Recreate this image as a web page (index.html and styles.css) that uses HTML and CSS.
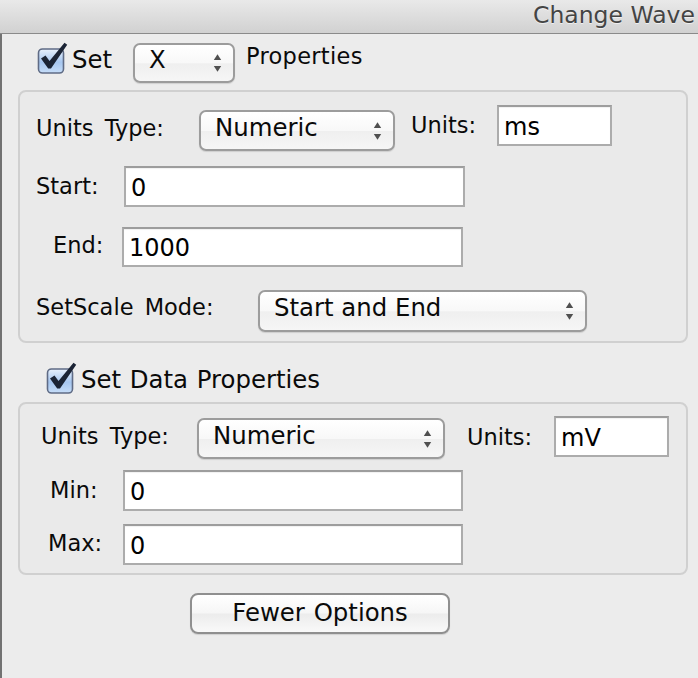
FILE: index.html
```html
<!DOCTYPE html>
<html>
<head>
<meta charset="utf-8">
<title>Change Wave</title>
<link rel="stylesheet" href="styles.css">
</head>
<body>
<div class="window">
  <div class="titlebar"><span class="title">Change Wave</span></div>
  <div class="content">
    <div class="row row-set">
      <svg class="checkbox" width="31" height="32" viewBox="0 0 31 32">
        <defs>
          <linearGradient id="cbg1" x1="0" y1="0" x2="0" y2="1">
            <stop offset="0" stop-color="#e8f1fc"/>
            <stop offset="0.55" stop-color="#a6c6ef"/>
            <stop offset="1" stop-color="#c6ddf8"/>
          </linearGradient>
        </defs>
        <rect x="1.5" y="7" width="25" height="24" rx="4" fill="url(#cbg1)" stroke="#5f6b85" stroke-width="1.6"/>
        <path d="M4 16.5 L8.5 13.5 L12.5 19 L27.5 0.8 L30.2 2.8 L14 26.5 L11.2 26.5 Z" fill="#1b2435"/>
      </svg>
      <span class="check-label set-label">Set</span>
      <div class="popup popup-x">
        <span class="popup-text">X</span>
        <svg class="arrows" width="9" height="20" viewBox="0 0 9 20"><polygon points="0.8,7 4.5,1.2 8.2,7" fill="#505050"/><polygon points="0.8,13 4.5,18.8 8.2,13" fill="#505050"/></svg>
      </div>
      <span class="label props-label">Properties</span>
    </div>

    <div class="group group-x">
      <div class="row row-a">
        <span class="label lbl-a">Units Type:</span>
        <div class="popup popup-num1">
          <span class="popup-text">Numeric</span>
          <svg class="arrows" width="9" height="20" viewBox="0 0 9 20"><polygon points="0.8,7 4.5,1.2 8.2,7" fill="#505050"/><polygon points="0.8,13 4.5,18.8 8.2,13" fill="#505050"/></svg>
        </div>
        <span class="label lbl-units1">Units:</span>
        <div class="field field-units">ms</div>
      </div>
      <div class="row row-b">
        <span class="label lbl-start">Start:</span>
        <div class="field field-wide">0</div>
      </div>
      <div class="row row-c">
        <span class="label lbl-end">End:</span>
        <div class="field field-wide field-end">1000</div>
      </div>
      <div class="row row-d">
        <span class="label lbl-mode">SetScale Mode:</span>
        <div class="popup popup-mode">
          <span class="popup-text">Start and End</span>
          <svg class="arrows" width="9" height="20" viewBox="0 0 9 20"><polygon points="0.8,7 4.5,1.2 8.2,7" fill="#505050"/><polygon points="0.8,13 4.5,18.8 8.2,13" fill="#505050"/></svg>
        </div>
      </div>
    </div>

    <div class="row row-data">
      <svg class="checkbox" width="31" height="32" viewBox="0 0 31 32">
        <defs>
          <linearGradient id="cbg2" x1="0" y1="0" x2="0" y2="1">
            <stop offset="0" stop-color="#e8f1fc"/>
            <stop offset="0.55" stop-color="#a6c6ef"/>
            <stop offset="1" stop-color="#c6ddf8"/>
          </linearGradient>
        </defs>
        <rect x="1.5" y="7" width="25" height="24" rx="4" fill="url(#cbg2)" stroke="#5f6b85" stroke-width="1.6"/>
        <path d="M4 16.5 L8.5 13.5 L12.5 19 L27.5 0.8 L30.2 2.8 L14 26.5 L11.2 26.5 Z" fill="#1b2435"/>
      </svg>
      <span class="check-label data-label">Set Data Properties</span>
    </div>

    <div class="group group-data">
      <div class="row row-e">
        <span class="label lbl-e">Units Type:</span>
        <div class="popup popup-num2">
          <span class="popup-text">Numeric</span>
          <svg class="arrows" width="9" height="20" viewBox="0 0 9 20"><polygon points="0.8,7 4.5,1.2 8.2,7" fill="#505050"/><polygon points="0.8,13 4.5,18.8 8.2,13" fill="#505050"/></svg>
        </div>
        <span class="label lbl-units2">Units:</span>
        <div class="field field-units">mV</div>
      </div>
      <div class="row row-f">
        <span class="label lbl-min">Min:</span>
        <div class="field field-data">0</div>
      </div>
      <div class="row row-g">
        <span class="label lbl-max">Max:</span>
        <div class="field field-data">0</div>
      </div>
    </div>

    <div class="button">Fewer Options</div>
  </div>
</div>
</body>
</html>
```

FILE: styles.css
```css
* {
  box-sizing: border-box;
}

html,
body {
  margin: 0;
  padding: 0;
}

body {
  width: 698px;
  height: 678px;
  overflow: hidden;
  background: #ececec;
  font-family: "DejaVu Sans", "Liberation Sans", sans-serif;
  color: #0a0a0a;
}

.window {
  width: 698px;
  height: 678px;
  display: flex;
  flex-direction: column;
}

/* title bar */
.titlebar {
  flex: none;
  height: 34px;
  padding-left: 533px;
  background: linear-gradient(#e9e9e9, #d1d1d1);
  border-bottom: 1px solid #8a8a8a;
  white-space: nowrap;
  overflow: hidden;
}

.title {
  display: block;
  font-size: 23.5px;
  line-height: 30px;
  color: #444;
  text-shadow: 0 1px 0 rgba(255, 255, 255, 0.6);
}

/* content */
.content {
  flex: 1;
  display: flex;
  flex-direction: column;
  align-items: flex-start;
  border-left: 2px solid #727272;
}

.row {
  display: flex;
  align-items: flex-start;
  flex: none;
}

.label {
  flex: none;
  font-size: 22.5px;
  line-height: 26px;
  word-spacing: 4px;
  white-space: nowrap;
}

.check-label {
  flex: none;
  font-size: 24.4px;
  line-height: 28px;
  word-spacing: 1px;
  white-space: nowrap;
}

.checkbox {
  flex: none;
  display: block;
}

/* popup buttons */
.popup {
  flex: none;
  display: flex;
  align-items: center;
  justify-content: space-between;
  padding: 0 11px 0 14px;
  border: 2px solid #9c9c9c;
  border-radius: 7px;
  background: linear-gradient(#ffffff, #f8f8f8 50%, #efefef 52%, #f6f6f6);
  box-shadow: 0 1px 1px rgba(0, 0, 0, 0.12);
}

.popup-text {
  font-size: 24.4px;
  line-height: 28px;
  margin-bottom: 6px;
  white-space: nowrap;
}

.arrows {
  display: block;
  flex: none;
}

/* text fields */
.field {
  flex: none;
  display: flex;
  align-items: center;
  padding: 2px 0 0 5px;
  background: #ffffff;
  border: 2px solid #acacac;
  border-top-color: #9d9d9d;
  box-shadow: inset 0 1px 1px rgba(0, 0, 0, 0.06);
  font-size: 24px;
  line-height: 28px;
  color: #000;
}

/* group boxes */
.group {
  flex: none;
  margin-left: 16px;
  width: 670px;
  padding-left: 16px;
  border: 2px solid #d0d0d0;
  border-radius: 8px;
  background: #eaeaea;
}

/* first row: Set [X] Properties */
.row-set {
  margin-top: 8px;
  margin-left: 35px;
  height: 41px;
}

.set-label {
  margin-left: 4px;
  margin-top: 4px;
  width: 61px;
}

.popup-x {
  margin-top: 1px;
  width: 102px;
  height: 40px;
}

.props-label {
  margin-left: 11px;
  margin-top: 1px;
  letter-spacing: 0.3px;
}

/* X group */
.group-x {
  margin-top: 7px;
  padding-top: 13px;
  padding-bottom: 9px;
}

.row-a {
  height: 46px;
}

.lbl-a {
  margin-top: 10px;
  width: 163px;
}

.popup-num1 {
  margin-top: 5px;
  width: 196px;
  height: 41px;
}

.lbl-units1 {
  margin-left: 16px;
  margin-top: 7px;
  width: 86px;
}

.field-units {
  width: 115px;
  height: 41px;
}

.row-b {
  margin-top: 15px;
  height: 41px;
}

.lbl-start {
  margin-top: 7px;
  width: 88px;
}

.field-wide {
  width: 341px;
  height: 41px;
}

.row-c {
  margin-top: 20px;
  height: 40px;
}

.lbl-end {
  margin-left: 17px;
  margin-top: 5px;
  width: 69px;
}

.field-end {
  height: 40px;
}

.row-d {
  margin-top: 23px;
  height: 42px;
}

.lbl-mode {
  margin-top: 4px;
  width: 222px;
}

.popup-mode {
  width: 329px;
  height: 42px;
}

/* Set Data Properties */
.row-data {
  margin-top: 19px;
  margin-left: 44px;
  height: 32px;
}

.data-label {
  margin-left: 4px;
  margin-top: 4px;
}

.group-data {
  margin-top: 8px;
  padding-top: 12px;
  padding-bottom: 8px;
}

.row-e {
  height: 43px;
}

.lbl-e {
  margin-left: 5px;
  margin-top: 7px;
  width: 156px;
}

.popup-num2 {
  margin-top: 2px;
  width: 248px;
  height: 41px;
}

.lbl-units2 {
  margin-left: 22px;
  margin-top: 8px;
  width: 87px;
}

.row-f {
  margin-top: 11px;
  height: 41px;
}

.lbl-min {
  margin-left: 14px;
  margin-top: 7px;
  width: 73px;
}

.field-data {
  width: 340px;
  height: 41px;
}

.row-g {
  margin-top: 13px;
  height: 41px;
}

.lbl-max {
  margin-left: 12px;
  margin-top: 6px;
  width: 75px;
}

/* push button */
.button {
  flex: none;
  margin-top: 18px;
  margin-left: 188px;
  width: 260px;
  height: 41px;
  display: flex;
  align-items: center;
  justify-content: center;
  border: 2px solid #8f8f8f;
  border-radius: 8px;
  background: linear-gradient(#ffffff, #f6f6f6 48%, #ececec 52%, #f9f9f9);
  box-shadow: 0 1px 1px rgba(0, 0, 0, 0.12);
  font-size: 24.4px;
  line-height: 28px;
  padding-bottom: 2px;
  word-spacing: 1px;
  white-space: nowrap;
}
```
